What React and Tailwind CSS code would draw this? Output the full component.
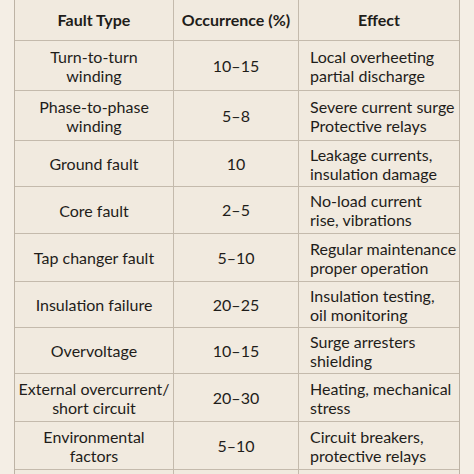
import React from 'react';

const rows = [
  { h: 'h-[50px]', type: ['Turn-to-turn', 'winding'], pct: '10–15', effect: ['Local overheeting', 'partial discharge'] },
  { h: 'h-[50px]', type: ['Phase-to-phase', 'winding'], pct: '5–8', effect: ['Severe current surge', 'Protective relays'] },
  { h: 'h-[46px]', type: ['Ground fault'], pct: '10', effect: ['Leakage currents,', 'insulation damage'] },
  { h: 'h-[47px]', type: ['Core fault'], pct: '2–5', effect: ['No-load current', 'rise, vibrations'] },
  { h: 'h-[48px]', type: ['Tap changer fault'], pct: '5–10', effect: ['Regular maintenance', 'proper operation'] },
  { h: 'h-[46px]', type: ['Insulation failure'], pct: '20–25', effect: ['Insulation testing,', 'oil monitoring'] },
  { h: 'h-[46px]', type: ['Overvoltage'], pct: '10–15', effect: ['Surge arresters', 'shielding'] },
  { h: 'h-[48px]', type: ['External overcurrent/', 'short circuit'], pct: '20–30', effect: ['Heating, mechanical', 'stress'] },
  { h: 'h-[48px]', type: ['Environmental', 'factors'], pct: '5–10', effect: ['Circuit breakers,', 'protective relays'] },
  { h: 'h-[48px]', type: [''], pct: '', effect: [''] },
];

const Lines = ({ items }) => (
  <div className="leading-[19px] whitespace-nowrap">
    {items.map((t, i) => (
      <div key={i}>{t}</div>
    ))}
  </div>
);

export default function App() {
  return (
    <div
      className="w-[474px] h-[474px] overflow-hidden bg-[#f4eee5] text-[#1f1d1a] text-[16px]"
      style={{ fontFamily: 'Lato, "Noto Sans", sans-serif' }}
    >
      <div className="ml-[14px] w-[446px] -mt-px border border-[#bdb3a5] bg-[#f1eadf]">
        {/* header */}
        <div className="flex h-[41px] border-b border-[#c4baac] font-bold">
          <div className="w-[159px] shrink-0 flex items-center justify-center border-r border-[#c4baac]">Fault Type</div>
          <div className="w-[125px] shrink-0 flex items-center justify-center border-r border-[#c4baac]">Occurrence (%)</div>
          <div className="flex-1 flex items-center justify-center">Effect</div>
        </div>
        {rows.map((r, i) => (
          <div key={i} className={`flex ${r.h} border-b border-[#c4baac]`}>
            <div className="w-[159px] shrink-0 flex items-center justify-center text-center border-r border-[#c4baac]">
              <Lines items={r.type} />
            </div>
            <div className="w-[125px] shrink-0 flex items-center justify-center border-r border-[#c4baac]">{r.pct}</div>
            <div className="flex-1 flex items-center pl-[11px]">
              <Lines items={r.effect} />
            </div>
          </div>
        ))}
      </div>
    </div>
  );
}
